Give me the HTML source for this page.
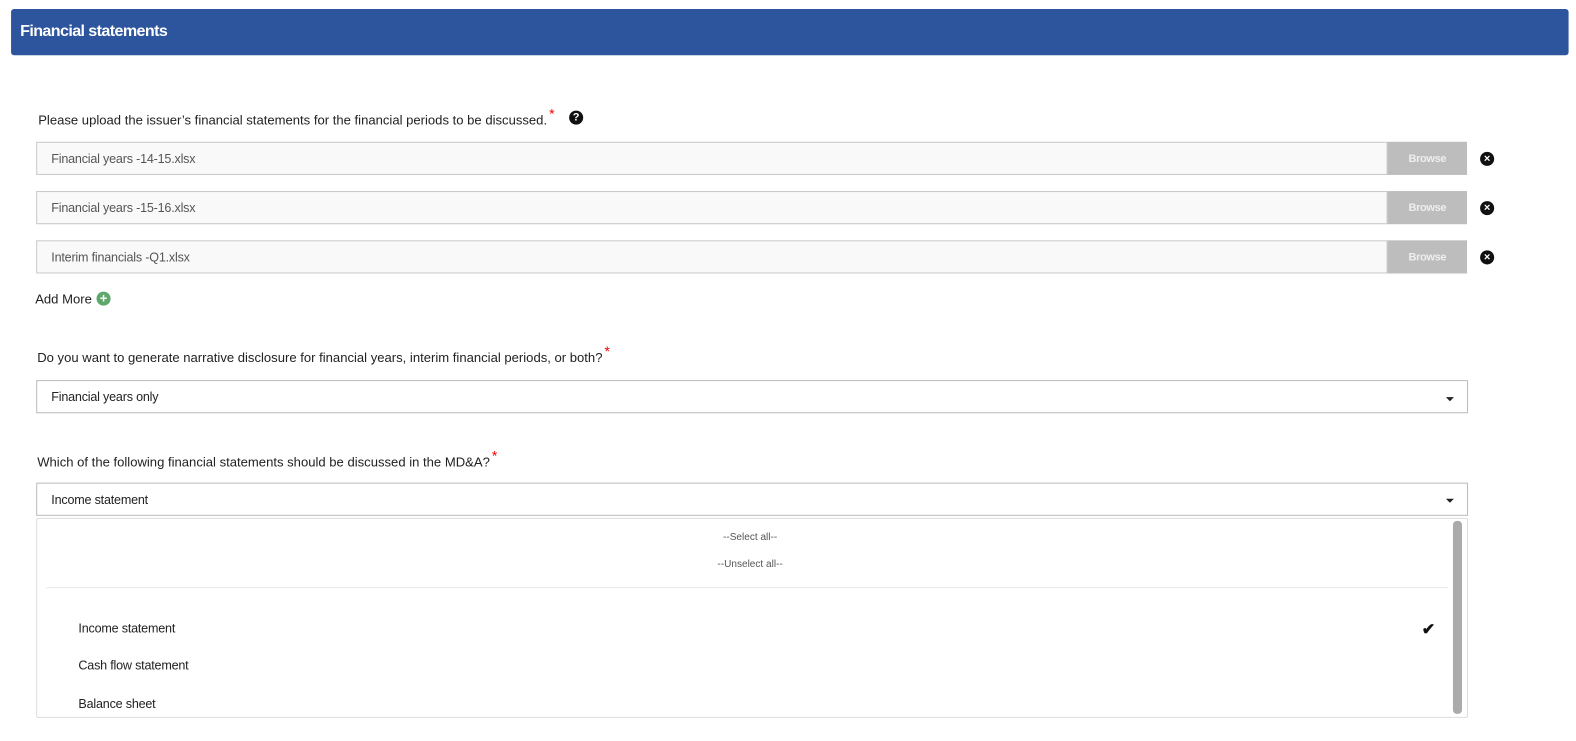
<!DOCTYPE html>
<html><head><meta charset="utf-8"><style>
*{box-sizing:border-box;margin:0;padding:0}
body{width:1576px;height:737px;background:#fff;font-family:"Liberation Sans",sans-serif;color:#222;position:relative;overflow:hidden}
#w{position:absolute;left:0;top:0;width:1576px;height:737px;transform:scale(1.0055);transform-origin:0 0}
.abs{position:absolute}
.hdr{left:11px;top:9px;width:1549px;height:46px;background:#2d559e;border-radius:3px;color:#fff;font-weight:bold;font-size:16px;letter-spacing:-0.6px;padding:14px 0 0 9px}
.lbl{font-size:13px;letter-spacing:0px;color:#222}
.star{color:#e00;font-size:14px;position:relative;top:-6px;margin-left:2px}
.inp{left:36px;width:1344px;height:33px;border:1px solid #c8c8c8;background:#f9f9f9;font-size:12.5px;color:#555;padding:9px 0 0 14px;letter-spacing:-0.2px}
.br{left:1380px;width:79px;height:33px;background:#bdbdbd;color:#eee;font-weight:bold;font-size:11px;text-align:center;padding-top:11px;letter-spacing:-0.4px}
.x{left:1472px;width:14px;height:14px;border-radius:50%;background:#111;color:#fff;font-size:11px;font-weight:bold;text-align:center;line-height:14px}
.sel{left:36px;width:1424px;height:33px;border:1px solid #bbb;background:#fff;font-size:12.5px;color:#222;padding:9px 0 0 14px;letter-spacing:-0.2px}
.caret{width:0;height:0;border-left:4px solid transparent;border-right:4px solid transparent;border-top:4px solid #222}
.it{left:78px;font-size:12.5px;letter-spacing:-0.2px}
.sm{font-size:10px;color:#555;width:1400px;left:46px;text-align:center}
</style></head><body><div id="w">
<div class="abs hdr">Financial statements</div>
<div class="abs lbl" style="left:38px;top:111px">Please upload the issuer’s financial statements for the financial periods to be discussed.<span class="star">*</span></div>
<div class="abs" style="left:566px;top:110px;width:14px;height:14px;border-radius:50%;background:#111;color:#fff;font-size:11px;font-weight:bold;text-align:center;line-height:14px">?</div>

<div class="abs inp" style="top:141px">Financial years -14-15.xlsx</div>
<div class="abs br" style="top:141px">Browse</div>
<div class="abs x" style="top:151px">×</div>
<div class="abs inp" style="top:190px">Financial years -15-16.xlsx</div>
<div class="abs br" style="top:190px">Browse</div>
<div class="abs x" style="top:200px">×</div>
<div class="abs inp" style="top:239px">Interim financials -Q1.xlsx</div>
<div class="abs br" style="top:239px">Browse</div>
<div class="abs x" style="top:249px">×</div>

<div class="abs lbl" style="left:35px;top:290px">Add More</div>
<div class="abs" style="left:96px;top:290px;width:14px;height:14px;border-radius:50%;background:#5da86a;color:#fff;font-size:13px;font-weight:bold;text-align:center;line-height:14px">+</div>

<div class="abs lbl" style="left:37px;top:347px">Do you want to generate narrative disclosure for financial years, interim financial periods, or both?<span class="star">*</span></div>
<div class="abs sel" style="top:378px">Financial years only</div>
<div class="abs caret" style="left:1438px;top:395px"></div>

<div class="abs lbl" style="left:37px;top:451px">Which of the following financial statements should be discussed in the MD&amp;A?<span class="star">*</span></div>
<div class="abs sel" style="top:480px">Income statement</div>
<div class="abs caret" style="left:1438px;top:496px"></div>

<div class="abs" style="left:36px;top:515px;width:1424px;height:199px;border:1px solid #ddd;border-radius:2px;background:#fff"></div>
<div class="abs sm" style="top:529px">--Select all--</div>
<div class="abs sm" style="top:556px">--Unselect all--</div>
<div class="abs" style="left:46px;top:584px;width:1394px;height:1px;background:#e6e6e6"></div>
<div class="abs it" style="top:618px">Income statement</div>
<div class="abs" style="left:1414px;top:616px;font-size:16px;font-weight:bold;color:#111">✔</div>
<div class="abs it" style="top:655px">Cash flow statement</div>
<div class="abs it" style="top:693px">Balance sheet</div>
<div class="abs" style="left:1445px;top:518px;width:9px;height:192px;background:#ababab;border-radius:4px"></div>
</div></body></html>
